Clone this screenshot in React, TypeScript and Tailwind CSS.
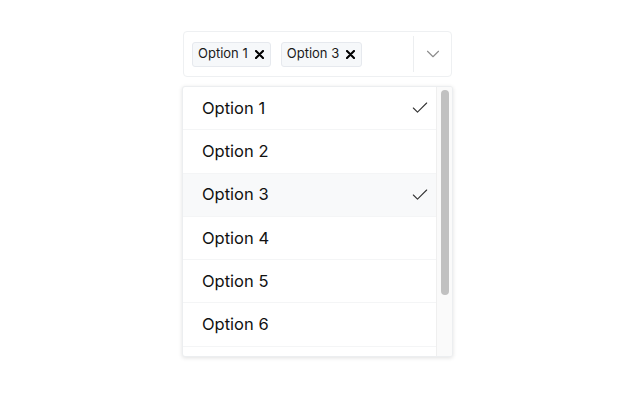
import { Check, ChevronDown } from "lucide-react";

const options = ["Option 1", "Option 2", "Option 3", "Option 4", "Option 5", "Option 6"];
const selected = ["Option 1", "Option 3"];

export default function App() {
  return (
    <div
      className="flex h-[400px] w-[640px] flex-col items-center bg-white pr-[5px] pt-[31px]"
      style={{ fontFamily: "Inter, 'Noto Sans', sans-serif" }}
    >
      <div className="flex h-[46px] w-[269px] items-center rounded-[4px] border border-[#eef0f2] bg-white">
        <div className="flex flex-1 items-center gap-[10px] pl-[8px]">
          {selected.map((s) => (
            <div
              key={s}
              className="flex h-[25px] items-center gap-[7px] rounded-[3px] border border-[#e6e9ee] bg-[#f6f8fa] pl-[5px] pr-[6px] text-[13px] text-[#1a1a1a]"
            >
              <span>{s}</span>
              <svg width="9" height="9" viewBox="0 0 9 9" className="text-black">
                <path d="M1 1 L8 8 M8 1 L1 8" stroke="currentColor" strokeWidth="2.1" strokeLinecap="round" />
              </svg>
            </div>
          ))}
        </div>
        <div className="h-[36px] w-px bg-[#eceef0]" />
        <div className="flex w-[37px] items-center justify-center">
          <ChevronDown size={22} strokeWidth={1.2} className="text-[#8c8c8c]" />
        </div>
      </div>
      <div className="mt-[9px] flex h-[271px] w-[271px] overflow-hidden rounded-[3px] border border-[#eceef0] bg-white shadow-[0_1px_4px_rgba(0,0,0,0.12)]">
        <div className="flex-1 overflow-hidden">
          {options.map((o) => {
            const on = selected.includes(o);
            return (
              <div
                key={o}
                className={`flex h-[43.3px] items-center justify-between border-b border-[#f4f5f6] pl-[19px] pr-[6px] text-[16.5px] text-[#111] ${
                  o === "Option 3" ? "bg-[#f8f9fa]" : ""
                }`}
              >
                <span>{o}</span>
                {on && <Check size={20} strokeWidth={1.3} className="text-[#333]" />}
              </div>
            );
          })}
        </div>
        <div className="flex w-[16px] justify-center border-l border-[#efefef] bg-[#fafafa] pt-[3px]">
          <div className="h-[205px] w-[8px] rounded-full bg-[#c1c1c1]" />
        </div>
      </div>
    </div>
  );
}
